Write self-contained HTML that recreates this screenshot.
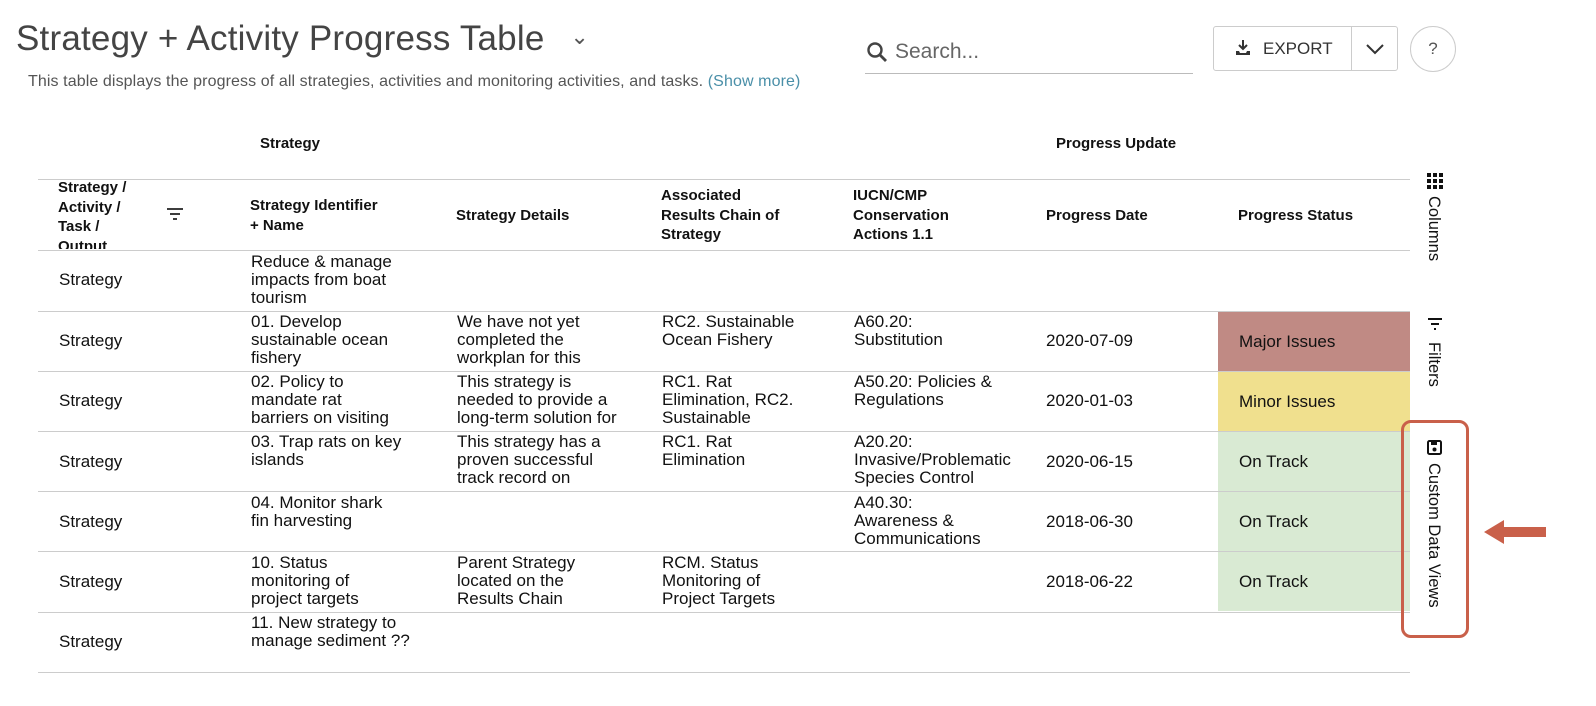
<!DOCTYPE html><html><head><style>
body{margin:0;width:1596px;height:706px;background:#fff;position:relative;font-family:"Liberation Sans",Arial,sans-serif;overflow:hidden}
.a{position:absolute}
.t{font-size:35px;color:#444;left:16px;top:19px;font-weight:300;letter-spacing:0.2px;white-space:nowrap}
.sub{left:28px;top:73px;font-size:16px;color:#555;white-space:nowrap;letter-spacing:0.1px}
.sub span{color:#4a8fa8}
.h{font-size:15px;font-weight:bold;color:#111;line-height:19.5px;white-space:nowrap}
.line{left:38px;width:1372px;height:1px;background:#ccc}
.c{font-size:17px;line-height:18px;color:#111;overflow-x:visible;overflow-y:clip;height:55px}
.st{left:1218px;width:192px;height:59px;font-size:17px;color:#111;line-height:59px;box-sizing:border-box;padding-left:21px}
.side{font-size:16.5px;color:#111;writing-mode:vertical-rl;left:1424px}
</style></head><body>
<div class="a t">Strategy + Activity Progress Table <span style="font-size:22px;color:#555;margin-left:16px;position:relative;top:-6px">&#8964;</span></div>
<div class="a sub">This table displays the progress of all strategies, activities and monitoring activities, and tasks. <span>(Show more)</span></div>
<svg class="a" style="left:866px;top:41px" width="22" height="22" viewBox="0 0 22 22"><circle cx="9" cy="9" r="6.5" fill="none" stroke="#444" stroke-width="2.4"/><path d="M14 14l6 6" stroke="#444" stroke-width="2.8"/></svg>
<div class="a" style="left:895px;top:40px;font-size:21px;color:#666">Search...</div>
<div class="a" style="left:865px;top:73px;width:328px;height:1px;background:#bbb"></div>
<div class="a" style="left:1213px;top:26px;width:185px;height:45px;border:1px solid #ccc;border-radius:3px;box-sizing:border-box"></div>
<div class="a" style="left:1351px;top:26px;width:1px;height:45px;background:#ccc"></div>
<svg class="a" style="left:1234px;top:39px" width="18" height="18" viewBox="0 0 18 18"><path d="M9 1v9M5 6l4 4 4-4" stroke="#333" stroke-width="2" fill="none"/><path d="M2 12v4h14v-4h-3l-1 2H6l-1-2z" fill="#333"/></svg>
<div class="a" style="left:1263px;top:39px;font-size:17px;color:#333">EXPORT</div>
<svg class="a" style="left:1365px;top:43px" width="20" height="12"><path d="M2 2l8 8 8-8" stroke="#333" stroke-width="2" fill="none"/></svg>
<div class="a" style="left:1410px;top:26px;width:46px;height:46px;border:1px solid #ccc;border-radius:50%;box-sizing:border-box;text-align:center;line-height:44px;font-size:17px;color:#555">?</div>

<div class="a h" style="left:260px;top:134px">Strategy</div>
<div class="a h" style="left:1056px;top:134px">Progress Update</div>
<div class="a line" style="top:179px"></div>
<div class="a h" style="left:58px;top:178px;height:71px;overflow:hidden;width:90px">Strategy /<br>Activity /<br>Task /<br>Output</div>
<svg class="a" style="left:166px;top:207px" width="18" height="14"><path d="M1 2h16M4 7h10M7 12h4" stroke="#222" stroke-width="1.8"/></svg>
<div class="a h" style="left:250px;top:196px">Strategy Identifier<br>+ Name</div>
<div class="a h" style="left:456px;top:206px">Strategy Details</div>
<div class="a h" style="left:661px;top:186px">Associated<br>Results Chain of<br>Strategy</div>
<div class="a h" style="left:853px;top:186px">IUCN/CMP<br>Conservation<br>Actions 1.1</div>
<div class="a h" style="left:1046px;top:206px">Progress Date</div>
<div class="a h" style="left:1238px;top:206px">Progress Status</div>

<div class="a st" style="top:312px;background:#c08a84">Major Issues</div>
<div class="a st" style="top:372px;background:#f0e08e">Minor Issues</div>
<div class="a st" style="top:432px;background:#d9ead3">On Track</div>
<div class="a st" style="top:492px;background:#d9ead3">On Track</div>
<div class="a st" style="top:552px;background:#d9ead3">On Track</div>

<div class="a line" style="top:250px"></div>
<div class="a line" style="top:311px"></div>
<div class="a line" style="top:371px"></div>
<div class="a line" style="top:431px"></div>
<div class="a line" style="top:491px"></div>
<div class="a line" style="top:551px"></div>
<div class="a line" style="top:612px"></div>
<div class="a line" style="top:672px"></div>

<div class="a c" style="left:59px;top:271px">Strategy</div>
<div class="a c" style="left:251px;top:253px;width:152px">Reduce &amp; manage impacts from boat tourism</div>

<div class="a c" style="left:59px;top:332px">Strategy</div>
<div class="a c" style="left:251px;top:313px;width:152px">01. Develop sustainable ocean fishery</div>
<div class="a c" style="left:457px;top:313px;width:160px">We have not yet completed the workplan for this strategy which is</div>
<div class="a c" style="left:662px;top:313px;width:140px">RC2. Sustainable Ocean Fishery</div>
<div class="a c" style="left:854px;top:313px;width:143px">A60.20: Substitution</div>
<div class="a c" style="left:1046px;top:332px">2020-07-09</div>

<div class="a c" style="left:59px;top:392px">Strategy</div>
<div class="a c" style="left:251px;top:373px;width:152px">02. Policy to mandate rat barriers on visiting boats</div>
<div class="a c" style="left:457px;top:373px;width:160px">This strategy is needed to provide a long-term solution for</div>
<div class="a c" style="left:662px;top:373px;width:140px">RC1. Rat Elimination, RC2. Sustainable Ocean Fishery</div>
<div class="a c" style="left:854px;top:373px;width:143px">A50.20: Policies &amp; Regulations</div>
<div class="a c" style="left:1046px;top:392px">2020-01-03</div>

<div class="a c" style="left:59px;top:453px">Strategy</div>
<div class="a c" style="left:251px;top:433px;width:152px">03. Trap rats on key islands</div>
<div class="a c" style="left:457px;top:433px;width:160px">This strategy has a proven successful track record on neighbouring islands</div>
<div class="a c" style="left:662px;top:433px;width:140px">RC1. Rat Elimination</div>
<div class="a c" style="left:854px;top:433px;width:143px">A20.20: Invasive/Problematic Species Control</div>
<div class="a c" style="left:1046px;top:453px">2020-06-15</div>

<div class="a c" style="left:59px;top:513px">Strategy</div>
<div class="a c" style="left:251px;top:494px;width:152px">04. Monitor shark fin harvesting</div>
<div class="a c" style="left:854px;top:494px;width:143px">A40.30: Awareness &amp; Communications</div>
<div class="a c" style="left:1046px;top:513px">2018-06-30</div>

<div class="a c" style="left:59px;top:573px">Strategy</div>
<div class="a c" style="left:251px;top:554px;width:152px">10. Status monitoring of project targets</div>
<div class="a c" style="left:457px;top:554px;width:160px">Parent Strategy located on the Results Chain "Status Monitoring"</div>
<div class="a c" style="left:662px;top:554px;width:140px">RCM. Status Monitoring of Project Targets</div>
<div class="a c" style="left:1046px;top:573px">2018-06-22</div>

<div class="a c" style="left:59px;top:633px">Strategy</div>
<div class="a c" style="left:251px;top:614px;width:160px">11. New strategy to manage sediment ??</div>

<svg class="a" style="left:1427px;top:173px" width="16" height="16"><g fill="#111"><rect x="0" y="0" width="4" height="4"/><rect x="6" y="0" width="4" height="4"/><rect x="12" y="0" width="4" height="4"/><rect x="0" y="6" width="4" height="4"/><rect x="6" y="6" width="4" height="4"/><rect x="12" y="6" width="4" height="4"/><rect x="0" y="12" width="4" height="4"/><rect x="6" y="12" width="4" height="4"/><rect x="12" y="12" width="4" height="4"/></g></svg>
<div class="a side" style="top:196px">Columns</div>
<svg class="a" style="left:1427px;top:318px" width="16" height="14"><path d="M1 1h14M4 6h8M7 11h2" stroke="#111" stroke-width="2"/></svg>
<div class="a side" style="top:342px">Filters</div>
<svg class="a" style="left:1427px;top:440px" width="15" height="15" viewBox="0 0 15 15"><rect x="1" y="1" width="13" height="13" rx="1.5" fill="none" stroke="#111" stroke-width="2"/><rect x="4" y="1" width="6" height="4" fill="#111"/><circle cx="7.5" cy="9.5" r="2" fill="#111"/></svg>
<div class="a side" style="top:463px">Custom Data Views</div>
<div class="a" style="left:1401px;top:420px;width:68px;height:218px;border:3px solid #c9604a;border-radius:10px;box-sizing:border-box"></div>
<svg class="a" style="left:1484px;top:519px" width="62" height="26"><path d="M0 13L20 1v7h42v10H20v7z" fill="#c9604a"/></svg>
</body></html>
